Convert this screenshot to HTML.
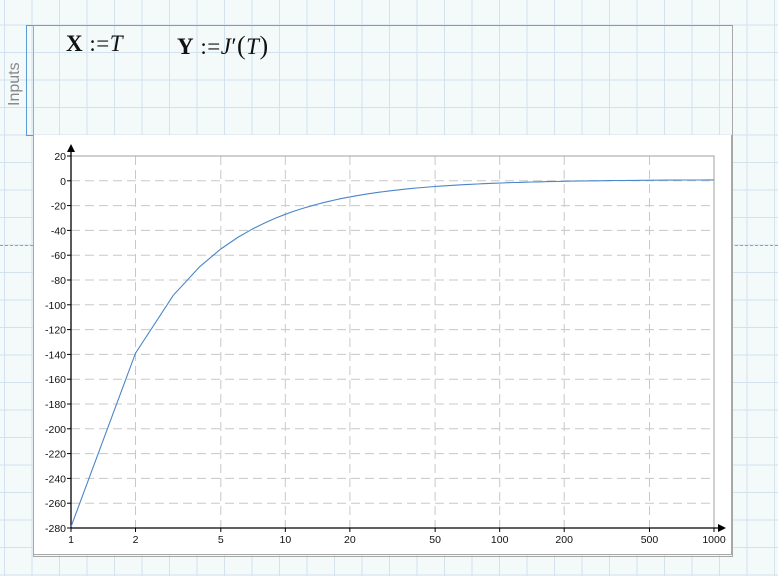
<!DOCTYPE html>
<html><head><style>
body{margin:0;width:778px;height:576px;overflow:hidden;position:relative;font-family:"Liberation Sans",sans-serif;
background-color:#f4f9f9;
background-image:linear-gradient(to right,#d2e3ee 1px,transparent 1px),linear-gradient(to bottom,#d2e3ee 1px,transparent 1px);
background-size:27.5px 27.5px;background-position:4px -3px;}
.dash{position:absolute;left:0;top:245px;width:778px;border-top:1px dashed #7aa6cf;}
.box{position:absolute;left:33px;top:25px;width:698px;height:530px;border:1px solid #a8a8a8;border-top-color:#8a9aa8;}
.plot{position:absolute;left:33px;top:135px;width:699px;height:420px;background:#fff;border:1px solid #a8a8a8;border-top:none;box-sizing:border-box;}
.br{position:absolute;left:26px;top:25px;width:6px;height:109px;border:1px solid #5b9bd5;border-right:none;}
.lab{position:absolute;left:6px;top:106px;transform:rotate(-90deg);transform-origin:0 0;color:#888;font-size:16px;}
.m{position:absolute;top:31px;font-family:"Liberation Serif",serif;font-size:23px;color:#111;letter-spacing:0.5px}
</style></head><body>
<div class="dash"></div>
<div class="plot"></div>
<div class="box"></div>
<div class="br"></div>
<div class="lab">Inputs</div>
<div class="m" style="left:66px"><b>X</b> :=<i>T</i></div>
<div class="m" style="left:177px"><b>Y</b> :=<i>J</i>′<span style="font-size:26px">(</span><i>T</i><span style="font-size:26px">)</span></div>
<svg id="s" width="778" height="576" style="position:absolute;left:0;top:0" font-family="Liberation Sans" font-size="10.5"></svg>
<script>
var s=document.getElementById('s'),h='';
var X0=71,X1=714,Y0=528,YT=156;
function px(t){return X0+(X1-X0)*Math.log10(t)/3}
function py(v){return Y0-(v+280)*(Y0-YT)/300}
[2,5,10,20,50,100,200,500].forEach(function(t){var x=px(t).toFixed(1);h+='<line x1="'+x+'" y1="'+YT+'" x2="'+x+'" y2="'+Y0+'" stroke="#c8c8c8" stroke-dasharray="9,5"/>';});
for(var v=-260;v<=0;v+=20){var y=py(v).toFixed(1);h+='<line x1="'+X0+'" y1="'+y+'" x2="'+X1+'" y2="'+y+'" stroke="#c8c8c8" stroke-dasharray="9,5"/>';}
h+='<rect x="'+X0+'" y="'+YT+'" width="'+(X1-X0)+'" height="'+(Y0-YT)+'" fill="none" stroke="#a0a0a0"/>';
for(var v=-280;v<=20;v+=20){var y=py(v);h+='<line x1="'+(X0-4)+'" y1="'+y+'" x2="'+X0+'" y2="'+y+'" stroke="#000"/><text x="'+(X0-5)+'" y="'+(y+4)+'" text-anchor="end" fill="#111">'+v+'</text>';}
[1,2,5,10,20,50,100,200,500,1000].forEach(function(t){var x=px(t);h+='<line x1="'+x+'" y1="'+Y0+'" x2="'+x+'" y2="'+(Y0+4)+'" stroke="#000"/><text x="'+x+'" y="'+(Y0+15)+'" text-anchor="middle" fill="#111">'+t+'</text>';});
h+='<line x1="'+X0+'" y1="'+Y0+'" x2="'+(X1+6)+'" y2="'+Y0+'" stroke="#000" stroke-width="1.3"/><path d="M'+(X1+12)+' '+Y0+'l-8 -4v8z"/>';
h+='<line x1="'+X0+'" y1="'+Y0+'" x2="'+X0+'" y2="'+(YT-6)+'" stroke="#000" stroke-width="1.3"/><path d="M'+X0+' '+(YT-12)+'l-4 8h8z"/>';
var pts=[];for(var t=1;t<=20;t++)pts.push(t);for(var k=0;k<=60;k++)pts.push(20*Math.pow(50,k/60));
var d='';pts.forEach(function(t,i){d+=(i?'L':'M')+px(t).toFixed(1)+' '+py(-280/t+1).toFixed(1);});
h+='<path d="'+d+'" fill="none" stroke="#4a86c8" stroke-width="1.1"/>';
s.innerHTML=h;
</script>
</body></html>
